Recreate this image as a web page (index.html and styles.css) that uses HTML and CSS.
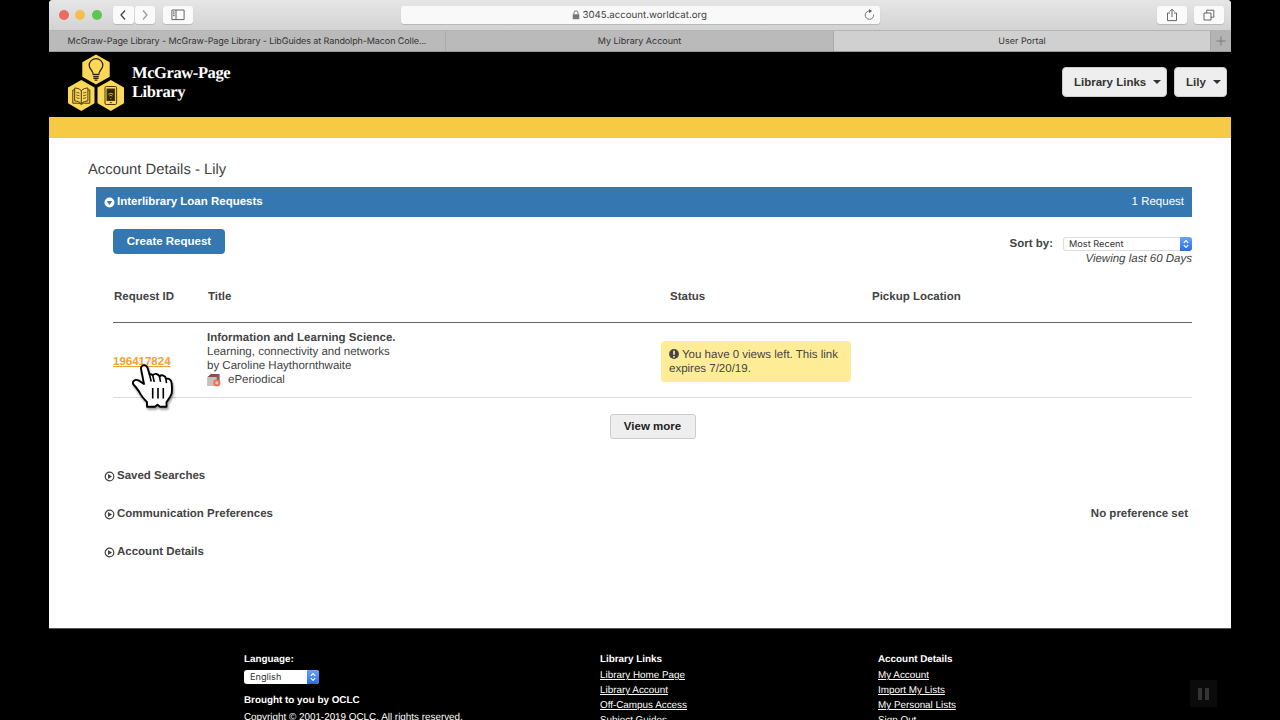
FILE: index.html
```html
<!DOCTYPE html>
<html lang="en">
<head>
    <meta charset="UTF-8">
    <meta name="viewport" content="width=device-width, initial-scale=1.0">
    <title>User Portal</title>
    <link rel="stylesheet" href="styles.css">
</head>
<body>
    <div class="window">
        <div class="toolbar">
            <div class="lights">
                <span class="light red"></span>
                <span class="light yellow"></span>
                <span class="light green"></span>
            </div>
            <div class="nav-buttons">
                <span class="tool-btn small"><svg width="20" height="18" viewBox="0 0 20 18"><path d="M12 4.500L8 9l4 4.500" fill="none" stroke="#444" stroke-width="1.300"/></svg></span>
                <span class="tool-btn small"><svg width="20" height="18" viewBox="0 0 20 18"><path d="M8 4.500L12 9l-4 4.500" fill="none" stroke="#999" stroke-width="1.200"/></svg></span>
            </div>
            <span class="tool-btn sidebar-btn"><svg width="14" height="12" viewBox="0 0 14 12"><path d="M.9 1h12.200v9.600H.9zM5 1v9.600M2 3h1.600M2 4.800h1.600M2 6.600h1.600" fill="none" stroke="#555" stroke-width=".9"/></svg></span>
            <div class="address">
                <svg class="lock" width="8" height="10" viewBox="0 0 8 10"><path d="M.7 4.300h6.600v4.900H.7z" fill="#777"/><path d="M2 4.500V2.800a2 2 0 0 1 4 0v1.700" fill="none" stroke="#777" stroke-width="1"/></svg>
                <span class="url">3045.account.worldcat.org</span>
                <svg class="reload" width="11" height="12" viewBox="0 0 11 12"><path d="M6.100 2A4.200 4.200 0 1 0 9.600 5.600" fill="none" stroke="#666" stroke-width=".9"/><path d="M5 0l3.200 2L5 4.200z" fill="#666"/></svg>
            </div>
            <div class="right-buttons">
                <span class="tool-btn"><svg width="12" height="14" viewBox="0 0 12 14"><path d="M4 5H1.500v7.600h9V5H8M6 9V1.300M3.700 3.500L6 1.200l2.300 2.300" fill="none" stroke="#555" stroke-width=".9"/></svg></span>
                <span class="tool-btn"><svg width="12" height="12" viewBox="0 0 12 12"><path d="M1 4h7v7H1zM3.700 4V1.200h7.100v7H8" fill="none" stroke="#555" stroke-width=".9"/></svg></span>
            </div>
        </div>
        <div class="tabs">
            <div class="tab tab-first">McGraw-Page Library - McGraw-Page Library - LibGuides at Randolph-Macon Colle...</div>
            <div class="tab tab-second">My Library Account</div>
            <div class="tab active">User Portal</div>
            <div class="tab-add"><svg width="10" height="10" viewBox="0 0 10 10"><path d="M5 .5v9M.5 5h9" stroke="#777" stroke-width=".9"/></svg></div>
        </div>

        <header class="header">
            <svg class="logo" width="58" height="58" viewBox="0 0 58 58">
                <g fill="#fad858">
                    <path d="M29 .5L42.700 8.200v14.600L29 30.500 15.300 22.800V8.200z"/>
                    <path d="M14.300 26L27.500 33.600v15.600L14.300 57 1 49.200V33.600z"/>
                    <path d="M43.800 26L57 33.600v15.600L43.800 57 30.500 49.200V33.600z"/>
                </g>
                <g fill="none" stroke="#4a3a12" stroke-width="1">
                    <path d="M26.200 20.500c0-4-4-5.300-4-9.300a6.800 6.500 0 0 1 13.600 0c0 4-4 5.300-4 9.300zM26.200 22.600h5.600M26.400 24.400h5.200M27.600 26.200h2.800" stroke="#30250b" stroke-width="1.300"/>
                    <path d="M14.300 36.600C12 34.500 10 34.200 7.700 34v13c2.500.1 4.700.7 6.600 2.700 1.900-2 4.100-2.600 6.600-2.700V34c-2.300.2-4.300.5-6.600 2.600zM14.300 36.600v13M7.700 36H5.800v13.200h6.300l2.200 1.200 2.200-1.200h6.300V36h-1.900"/>
                    <path d="M9.300 38.300l3.200.8M9.300 41l3.200.8M9.300 43.700l3.200.8M19.300 38.300l-3.200.8M19.300 41l-3.200.8M19.300 43.700l-3.200.8" stroke-width=".8"/>
                    <rect x="38" y="32.500" width="11.600" height="18" rx="1.300"/>
                    <rect x="40" y="35" width="7.600" height="11.500" fill="#30250b"/>
                    <path d="M41.300 40.300q2.500-2 5 0M42.300 42q1.500-1.200 3 0M43.800 44v1" stroke="#fad858" stroke-width=".8"/>
                    <path d="M42.800 48.600h2"/>
                </g>
            </svg>
            <div class="brand">McGraw-Page<br>Library</div>
            <div class="header-menu">
                <button class="menu-btn links-btn">Library Links<span class="caret"></span></button>
                <button class="menu-btn user-btn">Lily<span class="caret"></span></button>
            </div>
        </header>
        <div class="stripe"></div>

        <main class="content">
            <h1>Account Details - Lily</h1>
            <section class="panel">
                <div class="panel-head">
                    <svg class="disc" width="11" height="11" viewBox="0 0 11 11"><circle cx="5.500" cy="5.500" r="5" fill="#fff"/><path d="M2.800 4h5.400L5.500 8z" fill="#3577b0"/></svg>
                    <span class="panel-title">Interlibrary Loan Requests</span>
                    <span class="count">1 Request</span>
                </div>
                <div class="panel-body">
                    <div class="actions">
                        <button class="create">Create Request</button>
                        <div class="sort">
                            <div class="sort-row">
                                <span class="sort-label">Sort by:</span>
                                <div class="select sort-select"><span>Most Recent</span><i><svg width="8" height="10" viewBox="0 0 8 10"><path d="M1.800 3.800L4 1.500l2.200 2.300M1.800 6.200L4 8.500l2.200-2.300" fill="none" stroke="#fff" stroke-width="1.100"/></svg></i></div>
                            </div>
                            <div class="viewing">Viewing last 60 Days</div>
                        </div>
                    </div>
                    <div class="row row-head">
                        <div>Request ID</div>
                        <div>Title</div>
                        <div class="status-head">Status</div>
                        <div class="pickup-head">Pickup Location</div>
                    </div>
                    <div class="row row-item">
                        <div><a class="request-id" href="#">196417824</a></div>
                        <div class="title-cell">
                            <b>Information and Learning Science.</b><br>
                            Learning, connectivity and networks<br>
                            by Caroline Haythornthwaite<br>
                            <span class="format"><svg width="14" height="14" viewBox="0 0 14 14"><path d="M.5 4L4 1h8.500v9.500L9.500 13H.5z" fill="#aaa5a5"/><path d="M.5 4L4 1h8.500L9.500 4z" fill="#8b4c4a"/><path d="M9.500 4l3-3v9.500l-3 2.500z" fill="#77605f"/><path d="M.5 4h9v9h-9z" fill="#c5bfbf"/><circle cx="9.800" cy="9.800" r="3.600" fill="#ee7458"/><circle cx="9.800" cy="9.800" r="1.500" fill="#f9c7b5"/></svg>ePeriodical</span>
                        </div>
                        <div class="notice"><svg width="10" height="10" viewBox="0 0 10 10"><circle cx="5" cy="5" r="4.900" fill="#444"/><path d="M5 1.700v4.100M5 7v1.500" stroke="#ffec96" stroke-width="1.700"/></svg> You have 0 views left. This link expires 7/20/19.</div>
                        <div></div>
                    </div>
                    <button class="more">View more</button>
                </div>
            </section>
            <div class="fold">
                <svg class="disc" width="11" height="11" viewBox="0 0 11 11"><circle cx="5.500" cy="5.500" r="4.300" fill="none" stroke="#444" stroke-width="1.200"/><path d="M4 3l4 2.500L4 8z" fill="#444"/></svg>
                <span>Saved Searches</span>
            </div>
            <div class="fold">
                <svg class="disc" width="11" height="11" viewBox="0 0 11 11"><circle cx="5.500" cy="5.500" r="4.300" fill="none" stroke="#444" stroke-width="1.200"/><path d="M4 3l4 2.500L4 8z" fill="#444"/></svg>
                <span>Communication Preferences</span>
                <span class="fold-value">No preference set</span>
            </div>
            <div class="fold">
                <svg class="disc" width="11" height="11" viewBox="0 0 11 11"><circle cx="5.500" cy="5.500" r="4.300" fill="none" stroke="#444" stroke-width="1.200"/><path d="M4 3l4 2.500L4 8z" fill="#444"/></svg>
                <span>Account Details</span>
            </div>
        </main>

        <footer class="footer">
            <div class="foot-lang">
                <b>Language:</b>
                <div class="select lang-select"><span>English</span><i><svg width="8" height="10" viewBox="0 0 8 10"><path d="M1.800 3.800L4 1.500l2.200 2.300M1.800 6.200L4 8.500l2.200-2.300" fill="none" stroke="#fff" stroke-width="1.100"/></svg></i></div>
                <b class="brought">Brought to you by OCLC</b>
                <div class="copyright">Copyright © 2001-2019 OCLC. All rights reserved.</div>
            </div>
            <div class="foot-links">
                <b>Library Links</b>
                <a href="#">Library Home Page</a>
                <a href="#">Library Account</a>
                <a href="#">Off-Campus Access</a>
                <a href="#">Subject Guides</a>
            </div>
            <div class="foot-account">
                <b>Account Details</b>
                <a href="#">My Account</a>
                <a href="#">Import My Lists</a>
                <a href="#">My Personal Lists</a>
                <a href="#">Sign Out</a>
            </div>
        </footer>
    </div>

    <svg class="cursor" width="50" height="52" viewBox="0 0 50 52"><path d="M16 4.300c-2.400.2-3.400 2-2.800 4.400L16 23l-5.500-3.600c-4-1.800-7.200 1.800-4.600 4.600 2.500 2.400 4.600 5.600 6.800 9.400 1.600 3 3.800 5.300 6.300 7.800v4.600h8l2.500-2 2.500 2h6.500v-4.600c1.500-2.500 4-5 5.100-8.700.6-3.200.4-7 0-10.500-.5-3.700-3-5-5.600-4-.5-3.500-4.200-4.800-6.500-2.500-1.200-2.800-4.800-3.500-6.800-1.200-1-1-2.300-1.300-3.200-.8l-1.800-6.200c-.7-2-1.800-3.100-3.700-3z" fill="#fff" stroke="#000" stroke-width="1.900" stroke-linejoin="round"/><path d="M21.500 13.500l1.700 7M24.900 14.800l1.300 6M31.600 15.800l.9 5M38 18.500l.5 3.700M24.700 27v10.500M30 27v10.500M35.300 27v10.500" fill="none" stroke="#000" stroke-width="1.600"/></svg>
    <div class="pause"><span></span><span></span></div>
</body>
</html>
```
FILE: styles.css
```css
* {
    box-sizing: border-box;
}
body {
    margin: 0;
    height: 720px;
    overflow: hidden;
    background-color: #000;
    color: #444;
    font: 11.5px/14px "Liberation Sans", Arial, sans-serif;
    text-rendering: geometricPrecision;
}
svg {
    flex: none;
}
button {
    font: bold 11.5px/14px "Liberation Sans", Arial, sans-serif;
    padding: 0;
}
.window {
    width: 1182px;
    height: 720px;
    margin: 0 auto;
    display: flex;
    flex-direction: column;
    overflow: hidden;
    border-radius: 4px 4px 0 0;
    background-color: #fff;
}

/* browser chrome */
.toolbar {
    height: 31px;
    flex: none;
    display: flex;
    align-items: center;
    padding: 0 7px 0 10px;
    background: linear-gradient(#e6e6e6, #d3d3d3);
    border-bottom: 1px solid #b5b5b5;
    font-family: Inter, sans-serif;
}
.lights {
    display: flex;
    gap: 6.4px;
    width: 54px;
}
.light {
    width: 10px;
    height: 10px;
    border-radius: 50%;
}
.red {
    background-color: #ed6a5e;
}
.yellow {
    background-color: #f5bf4f;
}
.green {
    background-color: #5fc454;
}
.nav-buttons {
    display: flex;
    gap: 1px;
    margin-right: 8px;
}
.tool-btn {
    width: 30px;
    height: 18px;
    display: flex;
    align-items: center;
    justify-content: center;
    border-radius: 3px;
    background-color: #fafafa;
    box-shadow: 0 1px 1px rgba(0,0,0,0.15);
}
.tool-btn.small {
    width: 20.5px;
}
.address {
    width: 479px;
    height: 18px;
    margin-left: 207.5px;
    padding-right: 5px;
    display: flex;
    align-items: center;
    border-radius: 3px;
    background-color: #f9f9f9;
    box-shadow: 0 1px 1px rgba(0,0,0,0.15);
    font-size: 9.7px;
    color: #444;
}
.url {
    padding-top: 2px;
}
.lock {
    margin: 0 3px 0 171px;
}
.reload {
    margin-left: auto;
}
.right-buttons {
    display: flex;
    gap: 7px;
    margin-left: auto;
}
.tabs {
    height: 21px;
    flex: none;
    display: flex;
    background-color: #bababa;
    border-bottom: 1px solid #999;
    font: 9px/21px Inter, sans-serif;
    color: #333;
    text-align: center;
    white-space: nowrap;
}
.tab {
    padding-top: 1px;
    line-height: 20px;
}
.tab-first {
    width: 397px;
    border-right: 1px solid #aaa;
    letter-spacing: -0.1px;
}
.tab-second {
    width: 388px;
    border-right: 1px solid #aaa;
}
.active {
    flex: 1;
    background-color: #d0d0d0;
}
.tab-add {
    width: 21px;
    display: flex;
    align-items: center;
    justify-content: center;
    background-color: #b3b3b3;
    border-left: 1px solid #a5a5a5;
}

/* library header */
.header {
    height: 65px;
    flex: none;
    display: flex;
    align-items: flex-start;
    padding: 2px 4px 0 18px;
    background-color: #000;
}
.brand {
    margin: 9px 0 0 7px;
    font: bold 16.5px/19px "Liberation Serif", "Times New Roman", serif;
    letter-spacing: -0.4px;
    color: #fff;
}
.header-menu {
    display: flex;
    gap: 7px;
    margin: 13px 0 0 auto;
}
.menu-btn {
    height: 30px;
    display: flex;
    align-items: center;
    justify-content: space-between;
    padding: 0 5px 0 11px;
    border: 1px solid #ccc;
    border-radius: 4px;
    background-color: #eee;
    color: #333;
}
.links-btn {
    width: 105px;
}
.user-btn {
    width: 53px;
}
.caret {
    border: 4px solid transparent;
    border-top-color: #333;
    border-bottom: 0;
}
.stripe {
    height: 21px;
    flex: none;
    background-color: #f7ca45;
}

/* account */
.content {
    height: 490px;
    flex: none;
    padding: 22px 39px 0;
}
h1 {
    margin: 0;
    font-size: 14.8px;
    font-weight: normal;
    line-height: 20px;
}
.panel {
    margin: 7px 0 0 8px;
}
.panel-head {
    height: 30px;
    display: flex;
    align-items: center;
    padding: 0 8px;
    background-color: #3577b0;
    color: #fff;
}
.panel-title {
    font-weight: bold;
}
.disc {
    margin-right: 2px;
}
.count {
    margin-left: auto;
}
.panel-body {
    padding-left: 17px;
}
.actions {
    height: 66px;
    display: flex;
    justify-content: space-between;
    padding-top: 12px;
}
.create {
    width: 112px;
    height: 25px;
    padding-bottom: 1px;
    border: 0;
    border-radius: 4px;
    background-color: #3577b0;
    color: #fff;
}
.sort {
    padding-top: 8px;
    text-align: right;
}
.sort-row {
    display: flex;
    align-items: center;
    height: 14px;
    font-weight: bold;
}
.sort-label {
    margin-right: 10px;
}
.viewing {
    margin-top: 1px;
    font-style: italic;
}
.select {
    height: 14px;
    display: flex;
    align-items: center;
    justify-content: space-between;
    overflow: hidden;
    border-radius: 3px;
    background-color: #fff;
    color: #333;
    font: 9.2px/14px Inter, sans-serif;
    padding-left: 6px;
}
.select span {
    padding-top: 1px;
}
.select i {
    width: 12px;
    height: 14px;
    display: flex;
    align-items: center;
    justify-content: center;
    background: linear-gradient(#69a5f5, #2c6be6);
}
.sort-select {
    width: 129px;
    box-shadow: inset 0 0 0 1px #ddd;
}
.row {
    display: grid;
    grid-template-columns: 94px 453px 201px 1fr;
}
.row-head {
    height: 40px;
    padding-top: 7px;
    border-bottom: 1px solid #666;
    font-weight: bold;
}
.row-head div {
    padding-left: 1px;
}
.row-head .status-head {
    padding-left: 10px;
}
.row-head .pickup-head {
    padding-left: 11px;
}
.row-item {
    height: 75px;
    align-items: center;
    border-bottom: 1px solid #ddd;
}
.title-cell {
    margin-top: -2px;
}
.request-id {
    position: relative;
    top: 2px;
    font-weight: bold;
    color: #f0a236;
}
.format {
    display: flex;
    align-items: center;
    gap: 7px;
}
.notice {
    width: 190px;
    height: 41px;
    margin: 2px 0 0 1px;
    padding: 7px 8px;
    border-radius: 4px;
    background-color: #ffec96;
}
.notice svg {
    vertical-align: -1px;
}
.more {
    display: block;
    width: 86px;
    height: 25px;
    margin: 16px auto 0;
    padding-bottom: 1px;
    border: 1px solid #ccc;
    border-radius: 3px;
    background-color: #eee;
    color: #222;
}
.fold {
    display: flex;
    align-items: center;
    height: 14px;
    margin: 0 4px 24px 16px;
    font-weight: bold;
}
.panel + .fold {
    margin-top: 30px;
}
.fold-value {
    margin-left: auto;
}

/* footer */
.footer {
    flex: 1;
    display: grid;
    grid-template-columns: 356px 278px 1fr;
    padding: 23px 0 0 195px;
    background-color: #000;
    border-top: 1px solid #555;
    color: #fff;
    font-size: 9.87px;
    line-height: 15px;
}
.footer b,
.footer a {
    display: block;
    color: #fff;
}
.footer b {
    margin-bottom: 1px;
}
.lang-select {
    width: 75px;
    margin-top: 3px;
}
.footer .brought {
    margin: 9px 0 2px;
}

/* floating pieces */
.cursor {
    position: absolute;
    left: 128px;
    top: 361px;
    filter: drop-shadow(1px 2px 1px rgba(0,0,0,0.4));
}
.pause {
    position: absolute;
    left: 1190px;
    top: 680px;
    width: 27px;
    height: 27px;
    display: flex;
    align-items: center;
    justify-content: center;
    gap: 3px;
    background-color: #0b0b0b;
}
.pause span {
    width: 4px;
    height: 12px;
    background-color: #333;
}
```
